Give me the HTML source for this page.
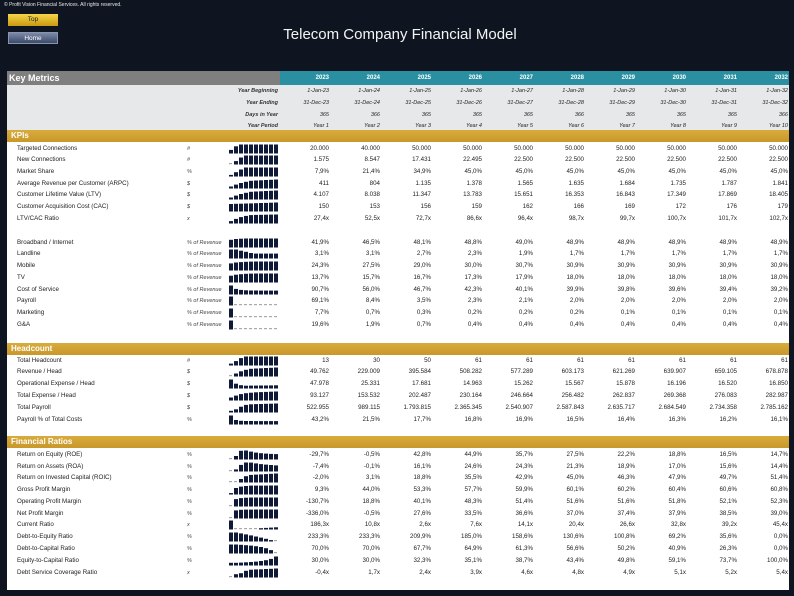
<!DOCTYPE html>
<html><head><meta charset="utf-8">
<style>
*{margin:0;padding:0;box-sizing:border-box}
body{width:794px;height:596px;background:#0f1520;font-family:"Liberation Sans",sans-serif;position:relative;overflow:hidden}
.copy{position:absolute;left:4px;top:2px;font-size:5px;color:#e8e8e8}
.btn{position:absolute;left:8px;width:50px;height:12px;font-size:6.5px;text-align:center;line-height:12px}
.top{top:14px;background:linear-gradient(#f5d54a,#c99a10);color:#222}
.home{top:32px;background:linear-gradient(#7c8aa8,#3c4a6a);color:#fff;border:1px solid #8894b0}
.title{position:absolute;left:0;width:800px;top:26px;text-align:center;color:#f4f4f4;font-size:15px}
.sheet{position:absolute;left:7px;top:71px;width:782px;height:519px;background:#fff}
.km{position:absolute;left:7px;top:71px;width:273px;height:14px;background:#7f7f7f;color:#fff;font-weight:bold;font-size:9px;line-height:14px;padding-left:2px}
.yr{position:absolute;left:280px;top:71px;width:509px;height:14px;background:#2a8fa0}
.hg{position:absolute;left:7px;top:85px;width:782px;height:45px;background:#e7e8ea}
.band{position:absolute;left:7px;width:782px;height:12px;background:linear-gradient(#d8ac3c,#c9972a);color:#fff;font-weight:bold;font-size:8px;line-height:12px;padding-left:4px}
.r{position:absolute;left:0;height:10px;width:794px;font-size:6.2px;line-height:10px;color:#222}
.r .l{position:absolute;left:17px}
.r .u{position:absolute;left:187px;font-style:italic;font-size:5.5px;color:#444}
.r .s{position:absolute;left:229px;top:0;width:50px;height:10px}
.r .v{position:absolute;width:51px;text-align:right}
.h .v{font-style:italic;font-size:5.5px}
.h .k{position:absolute;right:516px;font-style:italic;font-weight:bold;font-size:5.5px;color:#333}
.y .v{color:#fff;font-weight:bold;font-size:6px}
.rb{position:absolute;right:0;top:0;width:5px;height:596px;background:#0f1520}
</style></head><body>
<div class="copy">© Profit Vision Financial Services. All rights reserved.</div>
<div class="btn top">Top</div>
<div class="btn home">Home</div>
<div class="title">Telecom Company Financial Model</div>
<div class="sheet"></div>
<div class="km">Key Metrics</div>
<div class="yr"></div>
<div class="hg"></div>
<div class="band" style="top:130px">KPIs</div>
<div class="band" style="top:343px">Headcount</div>
<div class="band" style="top:436px">Financial Ratios</div>

<div id="rows">
<div class="r y" style="top:73px"><span class="v">2023</span><span class="v">2024</span><span class="v">2025</span><span class="v">2026</span><span class="v">2027</span><span class="v">2028</span><span class="v">2029</span><span class="v">2030</span><span class="v">2031</span><span class="v">2032</span></div>
<div class="r h" style="top:86px"><span class="k">Year Beginning</span><span class="v">1-Jan-23</span><span class="v">1-Jan-24</span><span class="v">1-Jan-25</span><span class="v">1-Jan-26</span><span class="v">1-Jan-27</span><span class="v">1-Jan-28</span><span class="v">1-Jan-29</span><span class="v">1-Jan-30</span><span class="v">1-Jan-31</span><span class="v">1-Jan-32</span></div>
<div class="r h" style="top:98px"><span class="k">Year Ending</span><span class="v">31-Dec-23</span><span class="v">31-Dec-24</span><span class="v">31-Dec-25</span><span class="v">31-Dec-26</span><span class="v">31-Dec-27</span><span class="v">31-Dec-28</span><span class="v">31-Dec-29</span><span class="v">31-Dec-30</span><span class="v">31-Dec-31</span><span class="v">31-Dec-32</span></div>
<div class="r h" style="top:110px"><span class="k">Days in Year</span><span class="v">365</span><span class="v">366</span><span class="v">365</span><span class="v">365</span><span class="v">365</span><span class="v">366</span><span class="v">365</span><span class="v">365</span><span class="v">365</span><span class="v">366</span></div>
<div class="r h" style="top:121px"><span class="k">Year Period</span><span class="v">Year 1</span><span class="v">Year 2</span><span class="v">Year 3</span><span class="v">Year 4</span><span class="v">Year 5</span><span class="v">Year 6</span><span class="v">Year 7</span><span class="v">Year 8</span><span class="v">Year 9</span><span class="v">Year 10</span></div>

<div class="r d" style="top:144px"><span class="l">Targeted Connections</span><span class="u">#</span><span class="v">20.000</span><span class="v">40.000</span><span class="v">50.000</span><span class="v">50.000</span><span class="v">50.000</span><span class="v">50.000</span><span class="v">50.000</span><span class="v">50.000</span><span class="v">50.000</span><span class="v">50.000</span></div>
<div class="r d" style="top:155px"><span class="l">New Connections</span><span class="u">#</span><span class="v">1.575</span><span class="v">8.547</span><span class="v">17.431</span><span class="v">22.495</span><span class="v">22.500</span><span class="v">22.500</span><span class="v">22.500</span><span class="v">22.500</span><span class="v">22.500</span><span class="v">22.500</span></div>
<div class="r d" style="top:167px"><span class="l">Market Share</span><span class="u">%</span><span class="v">7,9%</span><span class="v">21,4%</span><span class="v">34,9%</span><span class="v">45,0%</span><span class="v">45,0%</span><span class="v">45,0%</span><span class="v">45,0%</span><span class="v">45,0%</span><span class="v">45,0%</span><span class="v">45,0%</span></div>
<div class="r d" style="top:179px"><span class="l">Average Revenue per Customer (ARPC)</span><span class="u">$</span><span class="v">411</span><span class="v">804</span><span class="v">1.135</span><span class="v">1.378</span><span class="v">1.565</span><span class="v">1.635</span><span class="v">1.684</span><span class="v">1.735</span><span class="v">1.787</span><span class="v">1.841</span></div>
<div class="r d" style="top:190px"><span class="l">Customer Lifetime Value (LTV)</span><span class="u">$</span><span class="v">4.107</span><span class="v">8.038</span><span class="v">11.347</span><span class="v">13.783</span><span class="v">15.651</span><span class="v">16.353</span><span class="v">16.843</span><span class="v">17.349</span><span class="v">17.869</span><span class="v">18.405</span></div>
<div class="r d" style="top:202px"><span class="l">Customer Acquisition Cost (CAC)</span><span class="u">$</span><span class="v">150</span><span class="v">153</span><span class="v">156</span><span class="v">159</span><span class="v">162</span><span class="v">166</span><span class="v">169</span><span class="v">172</span><span class="v">176</span><span class="v">179</span></div>
<div class="r d" style="top:214px"><span class="l">LTV/CAC Ratio</span><span class="u">x</span><span class="v">27,4x</span><span class="v">52,5x</span><span class="v">72,7x</span><span class="v">86,6x</span><span class="v">96,4x</span><span class="v">98,7x</span><span class="v">99,7x</span><span class="v">100,7x</span><span class="v">101,7x</span><span class="v">102,7x</span></div>

<div class="r d" style="top:238px"><span class="l">Broadband / Internet</span><span class="u">% of Revenue</span><span class="v">41,9%</span><span class="v">46,5%</span><span class="v">48,1%</span><span class="v">48,8%</span><span class="v">49,0%</span><span class="v">48,9%</span><span class="v">48,9%</span><span class="v">48,9%</span><span class="v">48,9%</span><span class="v">48,9%</span></div>
<div class="r d" style="top:249px"><span class="l">Landline</span><span class="u">% of Revenue</span><span class="v">3,1%</span><span class="v">3,1%</span><span class="v">2,7%</span><span class="v">2,3%</span><span class="v">1,9%</span><span class="v">1,7%</span><span class="v">1,7%</span><span class="v">1,7%</span><span class="v">1,7%</span><span class="v">1,7%</span></div>
<div class="r d" style="top:261px"><span class="l">Mobile</span><span class="u">% of Revenue</span><span class="v">24,3%</span><span class="v">27,5%</span><span class="v">29,0%</span><span class="v">30,0%</span><span class="v">30,7%</span><span class="v">30,9%</span><span class="v">30,9%</span><span class="v">30,9%</span><span class="v">30,9%</span><span class="v">30,9%</span></div>
<div class="r d" style="top:273px"><span class="l">TV</span><span class="u">% of Revenue</span><span class="v">13,7%</span><span class="v">15,7%</span><span class="v">16,7%</span><span class="v">17,3%</span><span class="v">17,9%</span><span class="v">18,0%</span><span class="v">18,0%</span><span class="v">18,0%</span><span class="v">18,0%</span><span class="v">18,0%</span></div>
<div class="r d" style="top:285px"><span class="l">Cost of Service</span><span class="u">% of Revenue</span><span class="v">90,7%</span><span class="v">56,0%</span><span class="v">46,7%</span><span class="v">42,3%</span><span class="v">40,1%</span><span class="v">39,9%</span><span class="v">39,8%</span><span class="v">39,6%</span><span class="v">39,4%</span><span class="v">39,2%</span></div>
<div class="r d" style="top:296px"><span class="l">Payroll</span><span class="u">% of Revenue</span><span class="v">69,1%</span><span class="v">8,4%</span><span class="v">3,5%</span><span class="v">2,3%</span><span class="v">2,1%</span><span class="v">2,0%</span><span class="v">2,0%</span><span class="v">2,0%</span><span class="v">2,0%</span><span class="v">2,0%</span></div>
<div class="r d" style="top:308px"><span class="l">Marketing</span><span class="u">% of Revenue</span><span class="v">7,7%</span><span class="v">0,7%</span><span class="v">0,3%</span><span class="v">0,2%</span><span class="v">0,2%</span><span class="v">0,2%</span><span class="v">0,1%</span><span class="v">0,1%</span><span class="v">0,1%</span><span class="v">0,1%</span></div>
<div class="r d" style="top:320px"><span class="l">G&amp;A</span><span class="u">% of Revenue</span><span class="v">19,6%</span><span class="v">1,9%</span><span class="v">0,7%</span><span class="v">0,4%</span><span class="v">0,4%</span><span class="v">0,4%</span><span class="v">0,4%</span><span class="v">0,4%</span><span class="v">0,4%</span><span class="v">0,4%</span></div>

<div class="r d" style="top:356px"><span class="l">Total Headcount</span><span class="u">#</span><span class="v">13</span><span class="v">30</span><span class="v">50</span><span class="v">61</span><span class="v">61</span><span class="v">61</span><span class="v">61</span><span class="v">61</span><span class="v">61</span><span class="v">61</span></div>
<div class="r d" style="top:367px"><span class="l">Revenue / Head</span><span class="u">$</span><span class="v">49.762</span><span class="v">229.009</span><span class="v">395.584</span><span class="v">508.282</span><span class="v">577.289</span><span class="v">603.173</span><span class="v">621.269</span><span class="v">639.907</span><span class="v">659.105</span><span class="v">678.878</span></div>
<div class="r d" style="top:379px"><span class="l">Operational Expense / Head</span><span class="u">$</span><span class="v">47.978</span><span class="v">25.331</span><span class="v">17.681</span><span class="v">14.963</span><span class="v">15.262</span><span class="v">15.567</span><span class="v">15.878</span><span class="v">16.196</span><span class="v">16.520</span><span class="v">16.850</span></div>
<div class="r d" style="top:391px"><span class="l">Total Expense / Head</span><span class="u">$</span><span class="v">93.127</span><span class="v">153.532</span><span class="v">202.487</span><span class="v">230.164</span><span class="v">246.664</span><span class="v">256.482</span><span class="v">262.837</span><span class="v">269.368</span><span class="v">276.083</span><span class="v">282.987</span></div>
<div class="r d" style="top:403px"><span class="l">Total Payroll</span><span class="u">$</span><span class="v">522.955</span><span class="v">989.115</span><span class="v">1.793.815</span><span class="v">2.365.345</span><span class="v">2.540.907</span><span class="v">2.587.843</span><span class="v">2.635.717</span><span class="v">2.684.549</span><span class="v">2.734.358</span><span class="v">2.785.162</span></div>
<div class="r d" style="top:415px"><span class="l">Payroll % of Total Costs</span><span class="u">%</span><span class="v">43,2%</span><span class="v">21,5%</span><span class="v">17,7%</span><span class="v">16,8%</span><span class="v">16,9%</span><span class="v">16,5%</span><span class="v">16,4%</span><span class="v">16,3%</span><span class="v">16,2%</span><span class="v">16,1%</span></div>

<div class="r d" style="top:450px"><span class="l">Return on Equity (ROE)</span><span class="u">%</span><span class="v">-29,7%</span><span class="v">-0,5%</span><span class="v">42,8%</span><span class="v">44,9%</span><span class="v">35,7%</span><span class="v">27,5%</span><span class="v">22,2%</span><span class="v">18,8%</span><span class="v">16,5%</span><span class="v">14,7%</span></div>
<div class="r d" style="top:462px"><span class="l">Return on Assets (ROA)</span><span class="u">%</span><span class="v">-7,4%</span><span class="v">-0,1%</span><span class="v">16,1%</span><span class="v">24,6%</span><span class="v">24,3%</span><span class="v">21,3%</span><span class="v">18,9%</span><span class="v">17,0%</span><span class="v">15,6%</span><span class="v">14,4%</span></div>
<div class="r d" style="top:473px"><span class="l">Return on Invested Capital (ROIC)</span><span class="u">%</span><span class="v">-2,0%</span><span class="v">3,1%</span><span class="v">18,8%</span><span class="v">35,5%</span><span class="v">42,9%</span><span class="v">45,0%</span><span class="v">46,3%</span><span class="v">47,9%</span><span class="v">49,7%</span><span class="v">51,4%</span></div>
<div class="r d" style="top:485px"><span class="l">Gross Profit Margin</span><span class="u">%</span><span class="v">9,3%</span><span class="v">44,0%</span><span class="v">53,3%</span><span class="v">57,7%</span><span class="v">59,9%</span><span class="v">60,1%</span><span class="v">60,2%</span><span class="v">60,4%</span><span class="v">60,6%</span><span class="v">60,8%</span></div>
<div class="r d" style="top:497px"><span class="l">Operating Profit Margin</span><span class="u">%</span><span class="v">-130,7%</span><span class="v">18,8%</span><span class="v">40,1%</span><span class="v">48,3%</span><span class="v">51,4%</span><span class="v">51,6%</span><span class="v">51,6%</span><span class="v">51,8%</span><span class="v">52,1%</span><span class="v">52,3%</span></div>
<div class="r d" style="top:509px"><span class="l">Net Profit Margin</span><span class="u">%</span><span class="v">-336,0%</span><span class="v">-0,5%</span><span class="v">27,6%</span><span class="v">33,5%</span><span class="v">36,6%</span><span class="v">37,0%</span><span class="v">37,4%</span><span class="v">37,9%</span><span class="v">38,5%</span><span class="v">39,0%</span></div>
<div class="r d" style="top:520px"><span class="l">Current Ratio</span><span class="u">x</span><span class="v">186,3x</span><span class="v">10,8x</span><span class="v">2,6x</span><span class="v">7,6x</span><span class="v">14,1x</span><span class="v">20,4x</span><span class="v">26,6x</span><span class="v">32,8x</span><span class="v">39,2x</span><span class="v">45,4x</span></div>
<div class="r d" style="top:532px"><span class="l">Debt-to-Equity Ratio</span><span class="u">%</span><span class="v">233,3%</span><span class="v">233,3%</span><span class="v">209,9%</span><span class="v">185,0%</span><span class="v">158,6%</span><span class="v">130,6%</span><span class="v">100,8%</span><span class="v">69,2%</span><span class="v">35,6%</span><span class="v">0,0%</span></div>
<div class="r d" style="top:544px"><span class="l">Debt-to-Capital Ratio</span><span class="u">%</span><span class="v">70,0%</span><span class="v">70,0%</span><span class="v">67,7%</span><span class="v">64,9%</span><span class="v">61,3%</span><span class="v">56,6%</span><span class="v">50,2%</span><span class="v">40,9%</span><span class="v">26,3%</span><span class="v">0,0%</span></div>
<div class="r d" style="top:556px"><span class="l">Equity-to-Capital Ratio</span><span class="u">%</span><span class="v">30,0%</span><span class="v">30,0%</span><span class="v">32,3%</span><span class="v">35,1%</span><span class="v">38,7%</span><span class="v">43,4%</span><span class="v">49,8%</span><span class="v">59,1%</span><span class="v">73,7%</span><span class="v">100,0%</span></div>
<div class="r d" style="top:568px"><span class="l">Debt Service Coverage Ratio</span><span class="u">x</span><span class="v">-0,4x</span><span class="v">1,7x</span><span class="v">2,4x</span><span class="v">3,9x</span><span class="v">4,6x</span><span class="v">4,8x</span><span class="v">4,9x</span><span class="v">5,1x</span><span class="v">5,2x</span><span class="v">5,4x</span></div>
</div>
<div class="rb"></div>
<script>
document.querySelectorAll('#rows .r').forEach(function(r){
  var vs=r.querySelectorAll('.v');
  vs.forEach(function(v,i){v.style.left=(278+i*51)+'px';});
  if(!r.classList.contains('d'))return;
  var nums=[].map.call(vs,function(v){return parseFloat(v.textContent.replace(/\./g,'').replace(',','.').replace(/[%x]/g,''));});
  var mx=Math.max.apply(null,nums),mn=Math.min(0,Math.min.apply(null,nums));
  var s='<svg width="50" height="10" xmlns="http://www.w3.org/2000/svg">';
  nums.forEach(function(n,i){
    var h=mx>mn?(n-mn)/(mx-mn)*9:1;
    var x=i*5;
    if(h<1.2){s+='<rect x="'+x+'" y="8.5" width="3" height="0.6" fill="#555"/>';}
    else{s+='<rect x="'+x+'" y="'+(9.5-h).toFixed(1)+'" width="4" height="'+h.toFixed(1)+'" fill="#0e1a38"/>';}
  });
  s+='</svg>';
  var sp=document.createElement('span');sp.className='s';sp.innerHTML=s;r.appendChild(sp);
});
</script>
</body></html>
